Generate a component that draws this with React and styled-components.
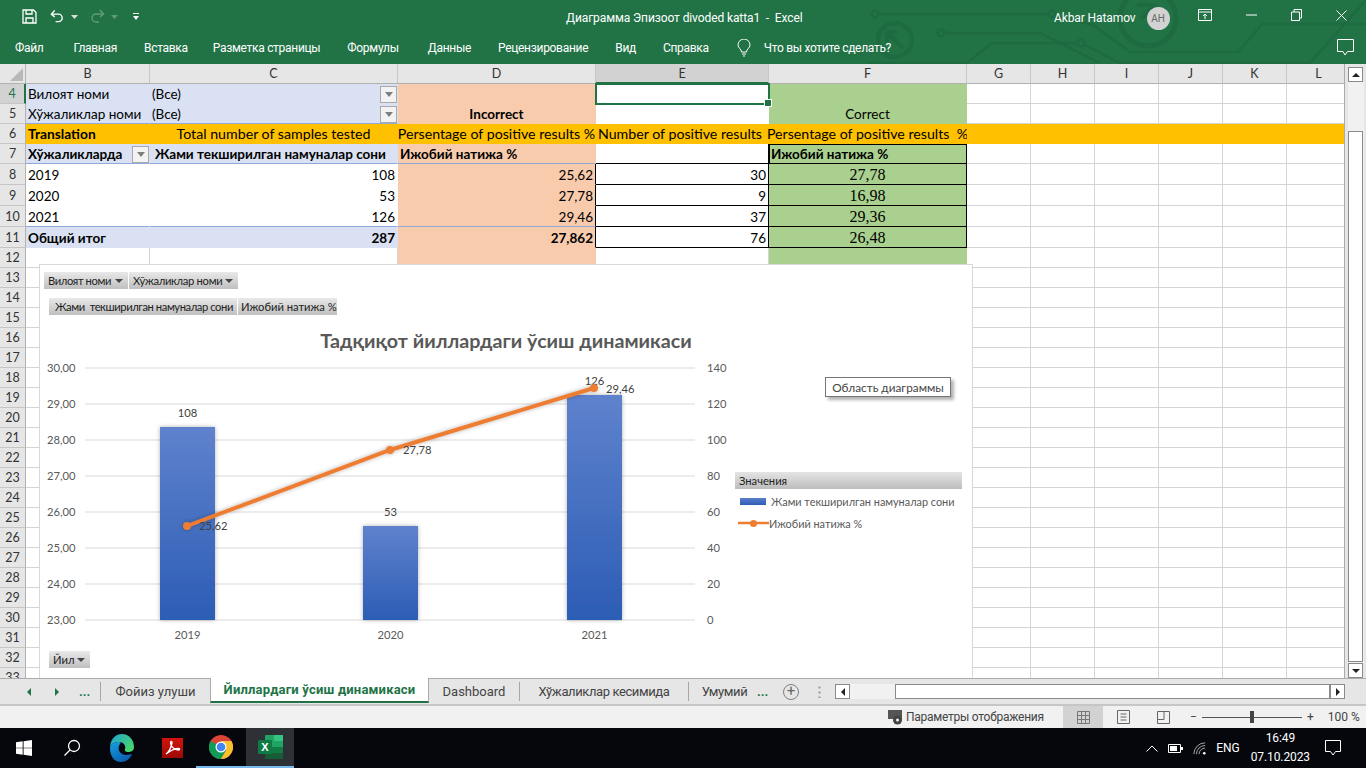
import React from "react"
import styled, { createGlobalStyle } from "styled-components"

const GlobalStyle = createGlobalStyle`
  html, body { margin: 0; padding: 0; overflow: hidden; background: #fff; }
  body { font-family: "Lato", "Noto Sans", sans-serif; }
  * { box-sizing: border-box; }
`;

const Page = styled.div`
  width: 1366px;
  height: 768px;
  display: flex;
  flex-direction: column;
  overflow: hidden;
  position: relative;
`;

const Header = styled.div`
  height: 64px;
  background: #217346;
  color: #fff;
  position: relative;
  flex: none;
  font-family: "Roboto", sans-serif;
`;

const Circuit = styled.svg`
  position: absolute;
  left: 0;
  top: 0;
`;

const TitleRow = styled.div`
  position: relative;
  height: 32px;
  display: flex;
  align-items: center;
  padding-left: 22px;
`;

const Quick = styled.div`
  width: 544px;
  display: flex;
  align-items: center;
`;

const QuickSlot = styled.span`
  display: flex;
  margin-left: ${p => p.$left || 0}px;
`;

const DocTitle = styled.div`
  width: 488px;
  font-size: 12px;
  letter-spacing: -0.1px;
  white-space: pre;
  margin-top: 3px;
`;

const User = styled.div`
  font-size: 12px;
  letter-spacing: -0.1px;
  white-space: nowrap;
  margin-top: 4px;
`;

const Avatar = styled.div`
  width: 23px;
  height: 23px;
  border-radius: 50%;
  background: #d2d2d2;
  color: #5f6b64;
  font-size: 10px;
  display: flex;
  align-items: center;
  justify-content: center;
  margin: 4px 0 0 11px;
`;

const WindowButtons = styled.div`
  display: flex;
  align-items: center;
  margin: -2px 0 0 28px;
  gap: 34px;
`;

const RibbonRow = styled.div`
  position: relative;
  height: 32px;
  display: flex;
  align-items: center;
  padding-left: 15px;
  font-size: 12px;
  letter-spacing: -0.3px;
  white-space: nowrap;
`;

const RibbonTab = styled.span`
  margin-right: ${p => p.$gap}px;
`;

const TellMe = styled.span`
  margin-left: 13px;
`;

const CommentIcon = styled.svg`
  position: absolute;
  right: 12px;
  top: 7px;
`;

const Body = styled.div`
  flex: none;
  height: 614px;
  display: flex;
  position: relative;
`;

const Sheet = styled.div`
  width: 1344px;
  height: 614px;
  overflow: hidden;
  display: grid;
  grid-template-columns: 26px 124px 248px 198px 173px 198px 64px 64px 64px 64px 64px 64px;
  grid-template-rows: 20px repeat(4, 20px) repeat(4, 21px) repeat(22, 20px);
  font-family: "Lato", "Noto Sans", sans-serif;
  font-size: 13.5px;
  color: #000;
  background: #fff;
`;

const Corner = styled.div`
  background: #e6e6e6;
  border-right: 1px solid #b1b1b1;
  border-bottom: 1px solid #b1b1b1;
  display: flex;
  align-items: flex-end;
  justify-content: flex-end;
  padding: 0 2px 2px 0;
`;

const CornerMark = styled.div`
  width: 0;
  height: 0;
  border-left: 13px solid transparent;
  border-bottom: 13px solid #b9b9b9;
`;

const ColHead = styled.div`
  background: ${p => (p.$active ? "#d2d2d2" : "#e6e6e6")};
  border-right: 1px solid #c6c6c6;
  border-bottom: ${p => (p.$active ? "2px solid #217346" : "1px solid #b1b1b1")};
  color: #333;
  font-size: 12.5px;
  display: flex;
  align-items: center;
  justify-content: center;
`;

const RowHead = styled.div`
  background: ${p => (p.$active ? "#d2d2d2" : "#e6e6e6")};
  border-bottom: 1px solid #c6c6c6;
  border-right: ${p => (p.$active ? "2px solid #217346" : "1px solid #b1b1b1")};
  color: ${p => (p.$active ? "#217346" : "#333")};
  font-size: 12.5px;
  display: flex;
  align-items: center;
  justify-content: center;
`;

const Cell = styled.div`
  background: ${p => p.$bg || "#fff"};
  border-right: 1px solid ${p => p.$right || "#d4d4d4"};
  border-bottom: 1px solid ${p => p.$bottom || "#d4d4d4"};
  ${p => p.$box && "box-shadow: inset 1px 1px 0 #000;"}
  display: flex;
  align-items: center;
  justify-content: ${p => p.$align || "flex-start"};
  padding: ${p => (p.$size ? 0 : 1)}px 2px 0 ${p => 2 + (p.$indent || 0)}px;
  white-space: pre;
  font-weight: ${p => (p.$bold ? 700 : 400)};
  ${p => p.$size && `font-size: ${p.$size}px;`}
  ${p => p.$serif && `font-family: "Liberation Serif", serif; font-size: 16px;`}
  position: relative;
`;

const SelectedCell = styled(Cell)`
  outline: 2px solid #217346;
  outline-offset: -1px;
  z-index: 2;
  &::after {
    content: "";
    position: absolute;
    right: -4px;
    bottom: -4px;
    width: 6px;
    height: 6px;
    background: #217346;
    border: 1px solid #fff;
  }
`;

const CellLabel = styled.span`
  flex: 1;
`;

const Filter = styled.div`
  width: 17px;
  height: 17px;
  background: #f3f3f3;
  border: 1px solid #a9a9a9;
  display: flex;
  align-items: center;
  justify-content: center;
  margin-right: -2px;
  &::before {
    content: "";
    border-left: 4px solid transparent;
    border-right: 4px solid transparent;
    border-top: 5px solid #7f7f7f;
  }
`;

const VScroll = styled.div`
  width: 22px;
  background: #e6e6e6;
  border-left: 1px solid #ababab;
  display: flex;
  flex-direction: column;
  justify-content: space-between;
  padding: 3px 2px 0 3px;
`;

const ScrollBtn = styled.div`
  width: 15px;
  height: 15px;
  background: #fff;
  border: 1px solid #8a8a8a;
  display: flex;
  align-items: center;
  justify-content: center;
  flex: none;
  &::before {
    content: "";
    border-left: 4px solid transparent;
    border-right: 4px solid transparent;
    ${p => (p.$down ? "border-top: 4px solid #222;" : "border-bottom: 4px solid #222;")}
  }
`;

const ScrollTrack = styled.div`
  flex: 1;
  position: relative;
  background: #f1f1f1;
`;

const ScrollThumb = styled.div`
  position: absolute;
  left: 0;
  top: 49px;
  width: 15px;
  height: 531px;
  background: #fff;
  border: 1px solid #8a8a8a;
`;

/* the chart floats over the sheet like in excel */
const ChartPanel = styled.div`
  position: absolute;
  left: 39px;
  top: 200px;
  width: 934px;
  height: 414px;
  background: #fff;
  border: 1px solid #d9d9d9;
  border-bottom: none;
  font-family: "Lato", "Noto Sans", sans-serif;
  display: flex;
  flex-direction: column;
`;

const FieldRow = styled.div`
  display: flex;
  gap: 1px;
  margin-left: ${p => p.$left}px;
  margin-top: ${p => p.$top}px;
`;

const FieldButton = styled.div`
  height: 17px;
  background: linear-gradient(#e9e9e9, #bfbfbf);
  color: #222;
  font-size: 11.2px;
  letter-spacing: ${p => p.$spacing || 0}px;
  width: ${p => p.$w}px;
  display: flex;
  align-items: center;
  justify-content: space-between;
  padding: 0 ${p => p.$pad || 4}px;
  white-space: pre;
  flex: none;
  ${p => p.$arrow && `
    &::after {
      content: "";
      border-left: 4px solid transparent;
      border-right: 4px solid transparent;
      border-top: 4px solid #444;
      margin-right: 1px;
    }
  `}
`;

const ChartTitle = styled.div`
  text-align: center;
  font-size: 19.7px;
  font-weight: 700;
  color: #595959;
  margin-top: 14px;
  height: 24px;
  line-height: 24px;
`;

const PlotRow = styled.div`
  flex: 1;
  position: relative;
`;

const Plot = styled.svg`
  display: block;
  text {
    font-family: "Lato", "Noto Sans", sans-serif;
    font-size: 11.2px;
    fill: #595959;
  }
  .dark {
    fill: #404040;
  }
`;

const YearField = styled(FieldButton)`
  position: absolute;
  left: 9px;
  top: 298px;
`;

const Legend = styled.div`
  position: absolute;
  left: 695px;
  top: 119px;
  width: 227px;
  font-size: 10.9px;
  color: #595959;
`;

const LegendHead = styled.div`
  height: 17px;
  background: linear-gradient(#e4e4e4, #bdbdbd);
  color: #222;
  padding-left: 4px;
  display: flex;
  align-items: center;
  margin-bottom: 1px;
  font-size: 11.2px;
`;

const LegendItem = styled.div`
  display: flex;
  align-items: center;
  height: 22px;
  padding-left: 3px;
  white-space: nowrap;
`;

const LegendBar = styled.div`
  width: 26px;
  height: 7px;
  margin: 0 5px 0 2px;
  background: linear-gradient(#5b7fcb, #2e5db4);
`;

const Tip = styled.div`
  position: absolute;
  left: 785px;
  top: 24px;
  width: 126px;
  height: 20px;
  background: #fff;
  border: 1px solid #767676;
  box-shadow: 3px 3px 3px rgba(0, 0, 0, 0.3);
  font-size: 11.8px;
  color: #444;
  display: flex;
  align-items: center;
  justify-content: center;
`;

const TabBar = styled.div`
  flex: none;
  height: 28px;
  background: #e6e6e6;
  border-top: 1px solid #ababab;
  border-bottom: 2px solid #c6c6c6;
  display: flex;
  align-items: stretch;
  font-family: "Roboto", sans-serif;
  font-size: 13px;
  color: #444;
  white-space: nowrap;
`;

const TabNav = styled.div`
  width: 100px;
  display: flex;
  align-items: center;
  color: #217346;
  font-weight: 700;
  padding-left: 27px;
  gap: 24px;
`;

const NavMore = styled.span`
  margin-left: -4px;
`;

const NavArrow = styled.div`
  width: 0;
  height: 0;
  border-top: 4px solid transparent;
  border-bottom: 4px solid transparent;
  ${p => (p.$right ? "border-left: 4px solid #217346;" : "border-right: 4px solid #217346;")}
`;

const Sep = styled.div`
  width: 1px;
  height: 19px;
  background: #a6a6a6;
  align-self: center;
  flex: none;
`;

const Tab = styled.div`
  width: ${p => p.$w}px;
  letter-spacing: ${p => p.$spacing || 0}px;
  display: flex;
  align-items: center;
  justify-content: center;
  flex: none;
  ${p => p.$active && `
    background: #fff;
    color: #217346;
    font-weight: 700;
    border-left: 1px solid #ababab;
    border-right: 1px solid #ababab;
    border-bottom: 2px solid #217346;
    margin-top: -1px;
    margin-bottom: 1px;
  `}
`;

const TabExtra = styled.div`
  display: flex;
  align-items: center;
  color: #217346;
  font-weight: 700;
  width: 18px;
  margin-left: -3px;
  flex: none;
`;

const AddSheet = styled.div`
  width: 16px;
  height: 16px;
  border: 1px solid #7f7f7f;
  border-radius: 50%;
  color: #666;
  font-size: 15px;
  line-height: 13px;
  text-align: center;
  align-self: center;
  margin-left: 8px;
  flex: none;
`;

const Dots = styled.div`
  align-self: center;
  margin-left: 19px;
  width: 3px;
  height: 13px;
  background-image: radial-gradient(#b0b0b0 1px, transparent 1.2px);
  background-size: 3px 5px;
  flex: none;
`;

const HScroll = styled.div`
  margin-left: 14px;
  width: 510px;
  height: 20px;
  align-self: center;
  display: flex;
  align-items: center;
`;

const HBtn = styled.div`
  width: 15px;
  height: 15px;
  background: #fff;
  border: 1px solid #8a8a8a;
  display: flex;
  align-items: center;
  justify-content: center;
  flex: none;
  &::before {
    content: "";
    border-top: 4px solid transparent;
    border-bottom: 4px solid transparent;
    ${p => (p.$right ? "border-left: 4px solid #222;" : "border-right: 4px solid #222;")}
  }
`;

const HGap = styled.div`
  width: 45px;
  height: 15px;
  background: #f1f1f1;
  flex: none;
`;

const HThumb = styled.div`
  flex: 1;
  height: 15px;
  background: #fff;
  border: 1px solid #8a8a8a;
`;

const StatusBar = styled.div`
  flex: none;
  height: 22px;
  background: #f1f1f1;
  display: flex;
  align-items: stretch;
  font-family: "Roboto", sans-serif;
  font-size: 12px;
  color: #444;
  padding-left: 888px;
  white-space: nowrap;
`;

const DisplaySettings = styled.div`
  display: flex;
  align-items: center;
  gap: 3px;
  width: 175px;
  flex: none;
  letter-spacing: -0.25px;
`;

const ViewButton = styled.div`
  width: 40px;
  display: flex;
  align-items: center;
  justify-content: center;
  background: ${p => (p.$active ? "#d2d2d2" : "transparent")};
  flex: none;
`;

const Zoom = styled.div`
  display: flex;
  align-items: center;
  margin-left: 7px;
  gap: 5px;
  flex: none;
`;

const ZoomTrack = styled.div`
  width: 100px;
  height: 1px;
  background: #555;
  position: relative;
`;

const ZoomThumb = styled.div`
  position: absolute;
  left: 48px;
  top: -6px;
  width: 4px;
  height: 12px;
  background: #444;
`;

const ZoomValue = styled.span`
  margin-left: 9px;
`;

const Taskbar = styled.div`
  flex: none;
  height: 40px;
  background: #05070d;
  display: flex;
  align-items: stretch;
  color: #fff;
  font-family: "Roboto", sans-serif;
  font-size: 12px;
`;

const TaskIcon = styled.div`
  width: ${p => p.$w || 48}px;
  display: flex;
  align-items: center;
  justify-content: center;
  flex: none;
  background: ${p => (p.$active ? "#2d3035" : "transparent")};
  border-bottom: ${p => (p.$open ? "2px solid #76b9ed" : "none")};
`;

const Tray = styled.div`
  margin-left: auto;
  display: flex;
  align-items: center;
  gap: 10px;
  padding-right: 25px;
`;

const Clock = styled.div`
  text-align: center;
  line-height: 19px;
  margin: 0 5px 0 1px;
  letter-spacing: -0.1px;
`;

const colNames = ["B", "C", "D", "E", "F", "G", "H", "I", "J", "K", "L"];
const PEACH = "#f8cbad";
const GREEN = "#a9d08e";
const YELLOW = "#ffc000";
const PIVOT = "#d9e1f2";
const BLUE = "#8ea9db";
const WIDE = 14.2;

// one entry per cell, from column B to L
const rowCells = {
  4: [
    { text: "Вилоят номи", bg: PIVOT, right: PIVOT, bottom: PIVOT },
    { text: "(Все)", bg: PIVOT, right: PIVOT, bottom: PIVOT, filter: true },
    { bg: PEACH, right: PEACH, bottom: PEACH },
    { selected: true },
    { bg: GREEN, right: GREEN, bottom: GREEN },
  ],
  5: [
    { text: "Хўжаликлар номи", bg: PIVOT, right: PIVOT, bottom: BLUE },
    { text: "(Все)", bg: PIVOT, right: PIVOT, bottom: BLUE, filter: true },
    { text: "Incorrect", bg: PEACH, right: PEACH, bottom: PEACH, bold: true, align: "center" },
    { right: "#fff", bottom: "#fff" },
    { text: "Correct", bg: GREEN, right: GREEN, bottom: GREEN, align: "center" },
  ],
  6: [
    { text: "Translation", bg: YELLOW, right: YELLOW, bottom: YELLOW, bold: true, size: 13.8 },
    { text: "Total number of samples tested", bg: YELLOW, right: YELLOW, bottom: YELLOW, align: "center", size: WIDE },
    { text: "Persentage of positive results %", bg: YELLOW, right: YELLOW, bottom: YELLOW, align: "center", size: WIDE },
    { text: "Number of positive results", bg: YELLOW, right: YELLOW, bottom: YELLOW, size: WIDE },
    { text: "Persentage of positive results  %", bg: YELLOW, right: YELLOW, bottom: YELLOW, align: "center", size: WIDE },
    ...Array(6).fill({ bg: YELLOW, right: YELLOW, bottom: YELLOW }),
  ],
  7: [
    { text: "Хўжаликларда", bg: PIVOT, right: PIVOT, bottom: BLUE, bold: true, filter: true },
    { text: "Жами текширилган намуналар сони", bg: PIVOT, right: PIVOT, bottom: BLUE, bold: true, indent: 3 },
    { text: "Ижобий натижа %", bg: PEACH, right: PEACH, bottom: BLUE, bold: true },
    { right: "#000", bottom: "#000" },
    { text: "Ижобий натижа %", bg: GREEN, right: "#000", bottom: "#000", bold: true, box: true },
  ],
  8: [
    { text: "2019", right: "#fff", bottom: "#fff" },
    { text: "108", right: "#fff", bottom: "#fff", align: "flex-end" },
    { text: "25,62", bg: PEACH, right: "#000", bottom: PEACH, align: "flex-end" },
    { text: "30", right: "#000", bottom: "#000", align: "flex-end" },
    { text: "27,78", bg: GREEN, right: "#000", bottom: "#000", align: "center", serif: true },
  ],
  9: [
    { text: "2020", right: "#fff", bottom: "#fff" },
    { text: "53", right: "#fff", bottom: "#fff", align: "flex-end" },
    { text: "27,78", bg: PEACH, right: "#000", bottom: PEACH, align: "flex-end" },
    { text: "9", right: "#000", bottom: "#000", align: "flex-end" },
    { text: "16,98", bg: GREEN, right: "#000", bottom: "#000", align: "center", serif: true },
  ],
  10: [
    { text: "2021", right: "#fff", bottom: BLUE },
    { text: "126", right: "#fff", bottom: BLUE, align: "flex-end" },
    { text: "29,46", bg: PEACH, right: "#000", bottom: BLUE, align: "flex-end" },
    { text: "37", right: "#000", bottom: "#000", align: "flex-end" },
    { text: "29,36", bg: GREEN, right: "#000", bottom: "#000", align: "center", serif: true },
  ],
  11: [
    { text: "Общий итог", bg: PIVOT, right: PIVOT, bottom: PIVOT, bold: true },
    { text: "287", bg: PIVOT, right: PIVOT, bottom: PIVOT, bold: true, align: "flex-end" },
    { text: "27,862", bg: PEACH, right: "#000", bottom: PEACH, bold: true, align: "flex-end" },
    { text: "76", right: "#000", bottom: "#000", align: "flex-end" },
    { text: "26,48", bg: GREEN, right: "#000", bottom: "#000", align: "center", serif: true },
  ],
  12: [
    {},
    {},
    { bg: PEACH, right: PEACH, bottom: PEACH },
    {},
    { bg: GREEN, right: GREEN, bottom: GREEN },
  ],
};

const SheetRow = ({ row }) => {
  const cells = rowCells[row] || [];
  return (
    <>
      <RowHead $active={row === 4}>{row}</RowHead>
      {colNames.map((col, i) => {
        const c = cells[i] || {};
        const Comp = c.selected ? SelectedCell : Cell;
        return (
          <Comp
            key={col}
            $bg={c.bg}
            $right={c.right}
            $bottom={c.bottom}
            $align={c.align}
            $bold={c.bold}
            $serif={c.serif}
            $box={c.box}
            $size={c.size}
            $indent={c.indent}
          >
            {c.filter ? <CellLabel>{c.text}</CellLabel> : c.text}
            {c.filter && <Filter />}
          </Comp>
        );
      })}
    </>
  );
};

const rows = Array.from({ length: 30 }, (_, i) => i + 4);

const yLeft = ["30,00", "29,00", "28,00", "27,00", "26,00", "25,00", "24,00", "23,00"];
const yRight = ["140", "120", "100", "80", "60", "40", "20", "0"];
const bars = [
  { x: 120, top: 74, label: "108", year: "2019" },
  { x: 323, top: 173, label: "53", year: "2020" },
  { x: 527, top: 42, label: "126", year: "2021" },
];
const PLOT_BASE = 267;

const ChartPlot = () => (
  <Plot width="932" height="325" viewBox="0 0 932 325">
    <defs>
      <linearGradient id="barFill" x1="0" y1="0" x2="0" y2="1">
        <stop offset="0" stopColor="#5f82cd" />
        <stop offset="1" stopColor="#2c5db5" />
      </linearGradient>
      <filter id="soft" x="-30%" y="-30%" width="160%" height="160%">
        <feDropShadow dx="0" dy="0" stdDeviation="2" floodOpacity="0.3" />
      </filter>
    </defs>
    {yLeft.map((v, i) => (
      <g key={v}>
        <line x1="45" x2="655" y1={15 + i * 36} y2={15 + i * 36} stroke="#d9d9d9" />
        <text x="7" y={19 + i * 36}>{v}</text>
        <text x="667" y={19 + i * 36}>{yRight[i]}</text>
      </g>
    ))}
    {bars.map(b => (
      <g key={b.year}>
        <rect x={b.x} y={b.top} width="55" height={PLOT_BASE - b.top} fill="url(#barFill)" filter="url(#soft)" />
        <text className="dark" x={b.x + 27.5} y={b.top - 10} textAnchor="middle">{b.label}</text>
        <text x={b.x + 27.5} y="286" textAnchor="middle">{b.year}</text>
      </g>
    ))}
    <g filter="url(#soft)">
      <polyline points="147,173 350,97 554,35" fill="none" stroke="#ed7d31" strokeWidth="4" />
      <circle cx="147" cy="173" r="4" fill="#ed7d31" />
      <circle cx="350" cy="97" r="4" fill="#ed7d31" />
      <circle cx="554" cy="35" r="4" fill="#ed7d31" />
    </g>
    <text className="dark" x="159" y="177">25,62</text>
    <text className="dark" x="363" y="101">27,78</text>
    <text className="dark" x="566" y="40">29,46</text>
  </Plot>
);

const WinIcon = () => (
  <svg width="16" height="16" viewBox="0 0 18 18" fill="#fff">
    <path d="M0 2.500 7.500 1.400v7.200H0zM8.500 1.300 18 0v8.600H8.500zM0 9.400h7.500v7.200L0 15.500zM8.500 9.400H18V18L8.500 16.700z" />
  </svg>
);

const SearchIcon = () => (
  <svg width="18" height="18" viewBox="0 0 18 18" fill="none" stroke="#fff" strokeWidth="1.300">
    <circle cx="11" cy="7" r="5.500" />
    <path d="M7 11 1.500 16.500" />
  </svg>
);

const EdgeIcon = () => (
  <svg width="24" height="28" viewBox="0 0 24 28">
    <defs>
      <linearGradient id="edgeTop" x1="0" y1="0" x2="1" y2="0.600">
        <stop offset="0" stopColor="#1f9fd8" />
        <stop offset="1" stopColor="#45d66e" />
      </linearGradient>
      <linearGradient id="edgeLow" x1="0" y1="0" x2="0.600" y2="1">
        <stop offset="0" stopColor="#18a0e0" />
        <stop offset="1" stopColor="#0b5fb0" />
      </linearGradient>
    </defs>
    <path d="M0 14C0 6 5 0 12 0s12 6 12 13c0 4-3 5-6 5-2 0-4-1-3-3 1-3-1-7-6-7-4 0-9 2-9 6z" fill="url(#edgeTop)" />
    <path d="M0 14c0-4 5-6 9-6 2 0 2 1 1 2-3 4-1 11 6 11 3 0 5-1 6-1-2 5-6 8-11 8-7 0-11-6-11-14z" fill="url(#edgeLow)" />
  </svg>
);

const AcrobatIcon = () => (
  <svg width="21" height="20" viewBox="0 0 21 20">
    <defs>
      <linearGradient id="pdfRed" x1="0" y1="0" x2="0" y2="1">
        <stop offset="0" stopColor="#d3140c" />
        <stop offset="1" stopColor="#9b0a05" />
      </linearGradient>
    </defs>
    <rect width="21" height="20" fill="url(#pdfRed)" />
    <path
      d="M4 16c3-2 5-6 6-11 .3-2-1.500-2-1.500 0 0 3 4 7 8 7 1.500 0 1.500-1.500 0-1.500-4 0-8 2-12.500 5.500z"
      fill="none"
      stroke="#fff"
      strokeWidth="1.300"
    />
  </svg>
);

const ChromeIcon = () => (
  <svg width="24" height="24" viewBox="0 0 24 24">
    <circle cx="12" cy="12" r="12" fill="#db4437" />
    <path d="M12 12 1.600 6A12 12 0 0 0 12 24l5.200-9z" fill="#0f9d58" />
    <path d="M12 6h10.400A12 12 0 0 1 12 24l5.200-9z" fill="#fbc02d" />
    <circle cx="12" cy="12" r="5.500" fill="#fff" />
    <circle cx="12" cy="12" r="4.300" fill="#4285f4" />
  </svg>
);

const ExcelIcon = () => (
  <svg width="25" height="24" viewBox="0 0 25 24">
    <rect x="7" y="0" width="18" height="24" rx="1" fill="#21a366" />
    <rect x="16" y="0" width="9" height="6" fill="#33c481" />
    <rect x="7" y="12" width="9" height="6" fill="#107c41" />
    <rect x="16" y="12" width="9" height="6" fill="#107c41" />
    <rect x="7" y="18" width="18" height="6" fill="#185c37" />
    <rect x="0" y="5" width="14" height="14" rx="1" fill="#0f7a43" />
    <text x="7" y="16" textAnchor="middle" fill="#fff" fontSize="11" fontWeight="700" fontFamily="Liberation Sans, sans-serif">X</text>
  </svg>
);

const App = () => (
  <Page>
    <GlobalStyle />
    <Header>
      <Circuit width="1366" height="64" viewBox="0 0 1366 64" fill="none" stroke="#1e6a41" strokeWidth="2.500">
        <circle cx="875" cy="14" r="3.500" />
        <path d="M879 14H1049" />
        <circle cx="1052" cy="14" r="3.500" />
        <path d="M1055 16l38 9 37 27h108l24-28h104" />
        <circle cx="895" cy="40" r="17" strokeWidth="4.500" />
        <path d="M887 32l16 16M887 32h10M887 32v10" strokeWidth="4" />
        <circle cx="941" cy="33" r="3.500" />
        <path d="M945 33h95l60 30" />
        <circle cx="1081" cy="43" r="3.500" />
        <path d="M1077 43h-85l-25 20H867M1085 45l35 18h190l56-63" />
        <circle cx="1148" cy="18" r="28" strokeWidth="5" />
        <path d="M1137 5h18v18M1155 5l-14 14" strokeWidth="4" />
      </Circuit>
      <TitleRow>
        <Quick>
          <svg width="15" height="15" viewBox="0 0 15 15" fill="none" stroke="#fff" strokeWidth="1.300">
            <path d="M1 1h10.500L14 3.500V14H1zM4 1v4h6V1M4 14V9h7v5" />
          </svg>
          <QuickSlot $left={13}>
            <svg width="15" height="14" viewBox="0 0 16 14" fill="none" stroke="#fff" strokeWidth="1.500">
              <path d="M5 1 1.500 5 5 8M2 5h7a4 4 0 0 1 0 8H6" />
            </svg>
          </QuickSlot>
          <QuickSlot $left={6}>
            <svg width="7" height="5" viewBox="0 0 7 5" fill="#ddd"><path d="M0 1h7L3.500 5z" /></svg>
          </QuickSlot>
          <QuickSlot $left={11}>
            <svg width="16" height="14" viewBox="0 0 16 14" fill="none" stroke="#5f9a7b" strokeWidth="1.500">
              <path d="M11 1l3.500 4L11 8M14 5H7a4 4 0 0 0 0 8h3" />
            </svg>
          </QuickSlot>
          <QuickSlot $left={6}>
            <svg width="7" height="5" viewBox="0 0 7 5" fill="#5f9a7b"><path d="M0 1h7L3.500 5z" /></svg>
          </QuickSlot>
          <QuickSlot $left={15}>
            <svg width="6" height="7" viewBox="0 0 6 7" fill="#fff"><path d="M0 0h6v1H0zM0 3h6L3 7z" /></svg>
          </QuickSlot>
        </Quick>
        <DocTitle>Диаграмма Эпизоот divoded katta1  -  Excel</DocTitle>
        <User>Akbar Hatamov</User>
        <Avatar>AH</Avatar>
        <WindowButtons>
          <svg width="14" height="12" viewBox="0 0 14 12" fill="none" stroke="#fff">
            <path d="M.5.500h13v11H.5zM.5 3h13M7 10V5M5 7l2-2 2 2" />
          </svg>
          <svg width="11" height="2" viewBox="0 0 11 2"><path d="M0 1h11" stroke="#fff" /></svg>
          <svg width="11" height="12" viewBox="0 0 11 12" fill="none" stroke="#fff">
            <path d="M.5 3h8v8.500h-8zM3 3V.500h7.500V9H8.500" />
          </svg>
          <svg width="11" height="11" viewBox="0 0 11 11" stroke="#fff"><path d="M.5.500l10 10M10.500.500l-10 10" /></svg>
        </WindowButtons>
      </TitleRow>
      <RibbonRow>
        <RibbonTab $gap={30}>Файл</RibbonTab>
        <RibbonTab $gap={27}>Главная</RibbonTab>
        <RibbonTab $gap={25}>Вставка</RibbonTab>
        <RibbonTab $gap={27}>Разметка страницы</RibbonTab>
        <RibbonTab $gap={29}>Формулы</RibbonTab>
        <RibbonTab $gap={27}>Данные</RibbonTab>
        <RibbonTab $gap={27}>Рецензирование</RibbonTab>
        <RibbonTab $gap={27}>Вид</RibbonTab>
        <RibbonTab $gap={28}>Справка</RibbonTab>
        <svg width="14" height="18" viewBox="0 0 14 18" fill="none" stroke="#fff">
          <path d="M4.500 13c0-3-3.500-4-3.500-7a6 6 0 0 1 12 0c0 3-3.500 4-3.500 7zM5 15h4M6 17h2" />
        </svg>
        <TellMe>Что вы хотите сделать?</TellMe>
        <CommentIcon width="17" height="17" viewBox="0 0 17 17" fill="none" stroke="#fff">
          <path d="M.5.500h16v12h-6L8 16l-2-3.500H.5z" />
        </CommentIcon>
      </RibbonRow>
    </Header>
    <Body>
      <Sheet>
        <Corner><CornerMark /></Corner>
        {colNames.map(c => <ColHead key={c} $active={c === "E"}>{c}</ColHead>)}
        {rows.map(r => <SheetRow key={r} row={r} />)}
      </Sheet>
      <VScroll>
        <ScrollBtn />
        <ScrollTrack><ScrollThumb /></ScrollTrack>
        <ScrollBtn $down />
      </VScroll>
      <ChartPanel>
        <FieldRow $left={4} $top={7}>
          <FieldButton $w={84} $arrow $spacing={-0.4}>Вилоят номи</FieldButton>
          <FieldButton $w={109} $arrow $spacing={-0.3}>Хўжаликлар номи</FieldButton>
        </FieldRow>
        <FieldRow $left={9} $top={9}>
          <FieldButton $w={188} $pad={6} $spacing={-0.42}>Жами  текширилган намуналар сони</FieldButton>
          <FieldButton $w={99} $pad={3}>Ижобий натижа %</FieldButton>
        </FieldRow>
        <ChartTitle>Тадқиқот йиллардаги ўсиш динамикаси</ChartTitle>
        <PlotRow>
          <ChartPlot />
          <YearField $w={41} $arrow>Йил</YearField>
          <Tip>Область диаграммы</Tip>
          <Legend>
            <LegendHead>Значения</LegendHead>
            <LegendItem><LegendBar />Жами текширилган намуналар сони</LegendItem>
            <LegendItem>
              <svg width="31" height="9" viewBox="0 0 31 9">
                <path d="M0 4h31" stroke="#ed7d31" strokeWidth="2.500" />
                <circle cx="15.500" cy="4.500" r="3.500" fill="#ed7d31" />
              </svg>
              Ижобий натижа %
            </LegendItem>
          </Legend>
        </PlotRow>
      </ChartPanel>
    </Body>
    <TabBar>
      <TabNav>
        <NavArrow />
        <NavArrow $right />
        <NavMore>...</NavMore>
      </TabNav>
      <Sep />
      <Tab $w={109}>Фойиз улуши</Tab>
      <Tab $w={219} $active $spacing={0.2}>Йиллардаги ўсиш динамикаси</Tab>
      <Tab $w={90}>Dashboard</Tab>
      <Sep />
      <Tab $w={168} $spacing={-0.4}>Хўжаликлар кесимида</Tab>
      <Sep />
      <Tab $w={71} $spacing={-0.4}>Умумий</Tab>
      <TabExtra>...</TabExtra>
      <AddSheet>+</AddSheet>
      <Dots />
      <HScroll>
        <HBtn />
        <HGap />
        <HThumb />
        <HBtn $right />
      </HScroll>
    </TabBar>
    <StatusBar>
      <DisplaySettings>
        <svg width="15" height="15" viewBox="0 0 15 15">
          <rect width="14" height="9" fill="#555" />
          <circle cx="9.500" cy="10" r="4.500" fill="#444" />
          <circle cx="9.500" cy="10" r="1.500" fill="#f1f1f1" />
        </svg>
        Параметры отображения
      </DisplaySettings>
      <ViewButton $active>
        <svg width="13" height="13" viewBox="0 0 13 13" fill="none" stroke="#777">
          <path d="M.5.500h12v12H.5zM4.500.500v12M8.500.500v12M.5 4.500h12M.5 8.500h12" />
        </svg>
      </ViewButton>
      <ViewButton>
        <svg width="13" height="14" viewBox="0 0 13 14" fill="none" stroke="#666">
          <path d="M.5.500h12v13H.5zM3.500 4h6M3.500 7h6M3.500 10h6" />
        </svg>
      </ViewButton>
      <ViewButton>
        <svg width="13" height="13" viewBox="0 0 13 13" fill="none" stroke="#666">
          <path d="M.5.500h12v12H.5zM.5 8.500h6.500V.500" />
        </svg>
      </ViewButton>
      <Zoom>
        <span>−</span>
        <ZoomTrack><ZoomThumb /></ZoomTrack>
        <span>+</span>
        <ZoomValue>100 %</ZoomValue>
      </Zoom>
    </StatusBar>
    <Taskbar>
      <TaskIcon><WinIcon /></TaskIcon>
      <TaskIcon><SearchIcon /></TaskIcon>
      <TaskIcon $w={52}><EdgeIcon /></TaskIcon>
      <TaskIcon><AcrobatIcon /></TaskIcon>
      <TaskIcon $w={50} $open><ChromeIcon /></TaskIcon>
      <TaskIcon $active $open><ExcelIcon /></TaskIcon>
      <Tray>
        <svg width="12" height="7" viewBox="0 0 12 7" fill="none" stroke="#fff"><path d="M.5 6.500 6 1l5.500 5.500" /></svg>
        <svg width="15" height="9" viewBox="0 0 15 9" fill="none" stroke="#fff">
          <path d="M.5.500h12v8H.5z" />
          <rect x="2" y="2" width="7" height="5" fill="#fff" stroke="none" />
          <rect x="13" y="3" width="2" height="3" fill="#fff" stroke="none" />
        </svg>
        <svg width="13" height="13" viewBox="0 0 15 15" fill="none" stroke="#bbb">
          <path d="M1 14A13 13 0 0 1 14 1M4 14A10 10 0 0 1 14 4M7 14a7 7 0 0 1 7-7" />
          <circle cx="13" cy="13" r="1.500" fill="#fff" stroke="none" />
        </svg>
        <span>ENG</span>
        <Clock>16:49<br />07.10.2023</Clock>
        <svg width="16" height="16" viewBox="0 0 16 16" fill="none" stroke="#fff">
          <path d="M.5.500h15v11h-5L8 15l-2.500-3.500h-5z" />
        </svg>
      </Tray>
    </Taskbar>
  </Page>
)

export default App
